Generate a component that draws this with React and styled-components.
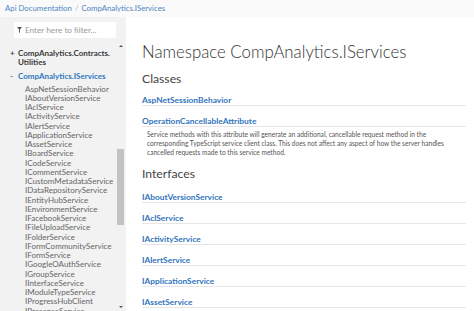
import React from "react";
import styled, { createGlobalStyle } from "styled-components";

const Global = createGlobalStyle`
  html, body { margin: 0; padding: 0; background: #fff; }
  body { font-family: Lato, "Open Sans", sans-serif; }
  * { box-sizing: border-box; }
`;

const Page = styled.div`
  width: 474px;
  height: 311px;
  overflow: hidden;
  display: flex;
  flex-direction: column;
`;

const Crumbs = styled.div`
  height: 17px;
  flex: none;
  display: flex;
  align-items: center;
  gap: 3px;
  padding: 0 0 2px 5px;
  background: #fafafa;
  font-size: 7.8px;
  color: #4f86c2;
`;

const Sep = styled.span`
  color: #b5b5b5;
`;

const Body = styled.div`
  flex: 1;
  display: flex;
  min-height: 0;
`;

const Sidebar = styled.aside`
  width: 126px;
  flex: none;
  background: #f2f2f2;
  display: flex;
  flex-direction: column;
  padding-top: 5px;
`;

const Filter = styled.div`
  margin: 0 10px 0 14px;
  height: 16px;
  background: #fff;
  display: flex;
  align-items: center;
  gap: 3px;
  padding-left: 3px;
  font-size: 8.2px;
  color: #9a9a9a;
`;

const TreeArea = styled.div`
  flex: 1;
  display: flex;
  min-height: 0;
  margin-top: 4px;
`;

const Tree = styled.ul`
  flex: 1;
  list-style: none;
  margin: 0;
  padding: 7px 0 0 10px;
  overflow: hidden;
`;

const Node = styled.li`
  display: flex;
  font-size: 8px;
  line-height: 9.2px;
  font-weight: 700;
  color: ${(p) => (p.$active ? "#2f78bf" : "#3a3a3a")};
  margin-bottom: ${(p) => p.$gap || 0}px;
  white-space: nowrap;
`;

const Toggle = styled.span`
  width: 8px;
  flex: none;
  text-align: left;
`;

const Leaf = styled.li`
  font-size: 8px;
  line-height: 9.25px;
  color: #666;
  padding-left: 15px;
  white-space: nowrap;
`;

const Scroll = styled.div`
  width: 9px;
  flex: none;
  display: flex;
  flex-direction: column;
  align-items: center;
  margin-right: 1px;
`;

const Arrow = styled.div`
  width: 0;
  height: 0;
  border-left: 2px solid transparent;
  border-right: 2px solid transparent;
  ${(p) =>
    p.$down
      ? "border-top: 2px solid #555; margin-bottom: 3px;"
      : "border-bottom: 2px solid #555; margin-top: 3px;"}
`;

const Track = styled.div`
  flex: 1;
  width: 100%;
  display: flex;
  flex-direction: column;
  padding-top: 102px;
`;

const Thumb = styled.div`
  width: 7px;
  margin: 0 auto;
  height: 76px;
  background: #c2c2c2;
`;

const Main = styled.main`
  flex: 1;
  padding: 23px 8px 0 16px;
  color: #333;
  overflow: hidden;
`;

const Title = styled.h1`
  margin: 0;
  font-size: 16.8px;
  font-weight: 300;
  line-height: 24px;
  color: #333;
  white-space: nowrap;
`;

const Section = styled.h2`
  margin: ${(p) => p.$top || 0}px 0 ${(p) => p.$bottom ?? 9}px;
  font-size: 12.2px;
  font-weight: 400;
  line-height: 17px;
  color: #444;
`;

const Item = styled.div`
  margin-bottom: ${(p) => p.$gap ?? 10}px;
`;

const ItemLink = styled.a`
  display: block;
  font-size: 8.4px;
  font-weight: 700;
  line-height: 10px;
  color: #3274bd;
  text-decoration: none;
  border-bottom: 1px solid #e6e6e6;
`;

const Desc = styled.p`
  margin: 2.5px 0 0 5px;
  font-size: 6.6px;
  line-height: 9.3px;
  color: #555;
  white-space: nowrap;
`;

const FunnelIcon = () => (
  <svg width="5" height="6" viewBox="0 0 5 6">
    <path d="M0 0h5L3 2.6V6L2 5.2V2.6z" fill="#555" />
  </svg>
);

const leaves = [
  "AspNetSessionBehavior",
  "IAboutVersionService",
  "IAclService",
  "IActivityService",
  "IAlertService",
  "IApplicationService",
  "IAssetService",
  "IBoardService",
  "ICodeService",
  "ICommentService",
  "ICustomMetadataService",
  "IDataRepositoryService",
  "IEntityHubService",
  "IEnvironmentService",
  "IFacebookService",
  "IFileUploadService",
  "IFolderService",
  "IFormCommunityService",
  "IFormService",
  "IGoogleOAuthService",
  "IGroupService",
  "IInterfaceService",
  "IModuleTypeService",
  "IProgressHubClient",
  "IPresenceService",
];

const interfaces = [
  "IAboutVersionService",
  "IAclService",
  "IActivityService",
  "IAlertService",
  "IApplicationService",
  "IAssetService",
];

export default function App() {
  return (
    <>
      <Global />
      <Page>
        <Crumbs>
          <span>Api Documentation</span>
          <Sep>/</Sep>
          <span>CompAnalytics.IServices</span>
        </Crumbs>
        <Body>
          <Sidebar>
            <Filter>
              <FunnelIcon />
              <span>Enter here to filter...</span>
            </Filter>
            <TreeArea>
              <Tree>
                <Node $gap={5}>
                  <Toggle>+</Toggle>
                  <span>
                    CompAnalytics.Contracts.
                    <br />
                    Utilities
                  </span>
                </Node>
                <Node $active $gap={3}>
                  <Toggle>-</Toggle>
                  <span>CompAnalytics.IServices</span>
                </Node>
                {leaves.map((l) => (
                  <Leaf key={l}>{l}</Leaf>
                ))}
              </Tree>
              <Scroll>
                <Arrow />
                <Track>
                  <Thumb />
                </Track>
                <Arrow $down />
              </Scroll>
            </TreeArea>
          </Sidebar>
          <Main>
            <Title>Namespace CompAnalytics.IServices</Title>
            <Section $top={6} $bottom={8}>Classes</Section>
            <Item>
              <ItemLink href="#">AspNetSessionBehavior</ItemLink>
            </Item>
            <Item $gap={8}>
              <ItemLink href="#">OperationCancellableAttribute</ItemLink>
              <Desc>
                Service methods with this attribute will generate an additional,
                cancellable request method in the
                <br />
                corresponding TypeScript service client class. This does not
                affect any aspect of how the server handles
                <br />
                cancelled requests made to this service method.
              </Desc>
            </Item>
            <Section $bottom={10}>Interfaces</Section>
            {interfaces.map((i) => (
              <Item key={i}>
                <ItemLink href="#">{i}</ItemLink>
              </Item>
            ))}
          </Main>
        </Body>
      </Page>
    </>
  );
}
